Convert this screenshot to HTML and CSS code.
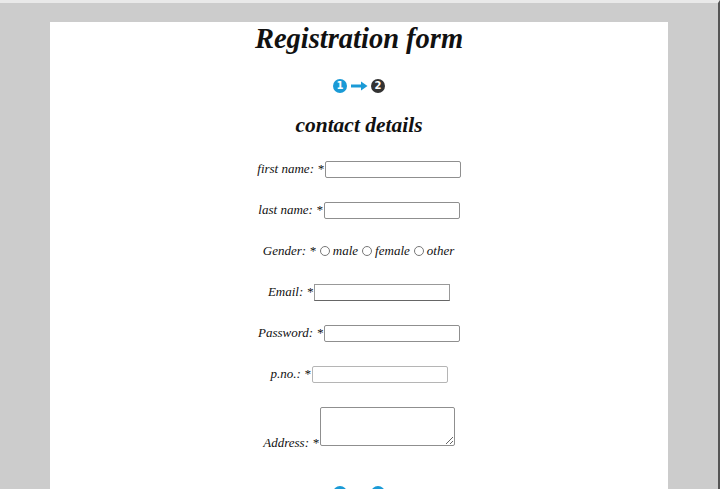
FILE: index.html
```html
<!DOCTYPE html>
<html lang="en">
<head>
<meta charset="utf-8">
<title>Registration form</title>
<link rel="stylesheet" href="styles.css">
</head>
<body>
<div class="sheet">
  <h1 class="title">Registration form</h1>
  <div class="steps">
    <span class="step step-active">1</span>
    <svg class="arrow" width="18" height="10" viewBox="0 0 18 10"><path d="M1 5H13" stroke="#1a9ad6" stroke-width="3"/><path d="M11 0.5L17.5 5L11 9.5Z" fill="#1a9ad6"/></svg>
    <span class="step step-next">2</span>
  </div>
  <h2 class="subtitle">contact details</h2>
  <form class="form">
    <div class="row"><label class="lbl">first name: *</label><input class="field" type="text"></div>
    <div class="row"><label class="lbl">last name: *</label><input class="field" type="text"></div>
    <div class="row"><label class="lbl">Gender: *</label><input class="radio" type="radio" name="g"><span class="opt">male</span><input class="radio" type="radio" name="g"><span class="opt">female</span><input class="radio" type="radio" name="g"><span class="opt">other</span></div>
    <div class="row"><label class="lbl">Email: *</label><input class="field field-flat" type="text"></div>
    <div class="row"><label class="lbl">Password: *</label><input class="field" type="password"></div>
    <div class="row"><label class="lbl">p.no.: *</label><input class="field field-light" type="text"></div>
    <div class="row row-area"><label class="lbl">Address: *</label><textarea class="area"></textarea></div>
  </form>
  <div class="nav">
    <span class="dot"></span>
    <span class="dot"></span>
  </div>
</div>
</body>
</html>
```
FILE: styles.css
```css
html, body {
  margin: 0;
  padding: 0;
}
body {
  background: #cccccc;
  border-top: 3px solid #e9e9e9;
  border-right: 2px solid #555;
  height: 486px;
  overflow: hidden;
  font-family: "Liberation Serif", "Times New Roman", serif;
  color: #111;
}
.sheet {
  margin: 19px 0 0 50px;
  width: 618px;
  height: 480px;
  background: #fff;
  display: flex;
  flex-direction: column;
  align-items: center;
}
.title {
  margin: 0;
  font-size: 28.5px;
  line-height: 34px;
  font-weight: bold;
  font-style: italic;
}
.steps {
  margin-top: 23px;
  display: flex;
  align-items: center;
  gap: 2px;
  height: 14px;
}
.step {
  width: 14px;
  height: 14px;
  border-radius: 50%;
  color: #fff;
  font-family: "DejaVu Sans", sans-serif;
  font-weight: bold;
  font-size: 10px;
  line-height: 14px;
  text-align: center;
}
.step-active { background: #1a9ad6; }
.step-next { background: #333; }
.arrow { display: block; margin: 0 1px; }
.subtitle {
  margin: 20px 0 0;
  font-size: 21.5px;
  line-height: 24px;
  font-weight: bold;
  font-style: italic;
}
.form {
  margin-top: 23px;
  display: flex;
  flex-direction: column;
  align-items: center;
  gap: 23px;
}
.row {
  display: flex;
  align-items: center;
  height: 18px;
  font-size: 13px;
  font-style: italic;
}
.lbl { margin-right: 1px; }
.field {
  box-sizing: border-box;
  width: 136px;
  height: 17px;
  border: 1px solid #8f8f8f;
  border-radius: 2px;
  padding: 0 2px;
  margin: 0;
  background: #fff;
}
.field-flat { border-radius: 0; border-color: #999 #999 #666 #999; }
.field-light { border-color: #b5b5b5; }
.radio {
  appearance: none;
  -webkit-appearance: none;
  width: 10px;
  height: 10px;
  border: 1px solid #777;
  border-radius: 50%;
  margin: 0 3px 0 3px;
  box-sizing: border-box;
}
.opt { margin-right: 1px; }
.row-area {
  height: 39px;
  margin-top: 1px;
  align-items: flex-end;
}
.row-area .lbl { line-height: 14px; margin-bottom: -4px; }
.area {
  box-sizing: border-box;
  width: 135px;
  height: 39px;
  border: 1px solid #8f8f8f;
  border-radius: 2px;
  margin: 0;
  resize: both;
}
.nav {
  margin-top: 40px;
  display: flex;
  gap: 24px;
}
.dot {
  width: 14px;
  height: 14px;
  border-radius: 50%;
  background: #1a9ad6;
}
```
